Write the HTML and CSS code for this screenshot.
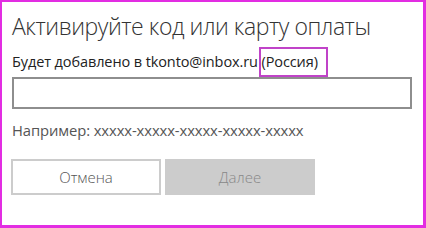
FILE: index.html
```html
<!DOCTYPE html>
<html lang="ru">
<head>
<meta charset="utf-8">
<link rel="stylesheet" href="styles.css">
</head>
<body>
<div class="dialog">
  <h1 class="title">Активируйте код или карту оплаты</h1>
  <p class="account">Будет добавлено в tkonto@inbox.ru <span class="region">(Россия)</span></p>
  <div class="code-input"></div>
  <p class="hint">Например: xxxxx-xxxxx-xxxxx-xxxxx-xxxxx</p>
  <div class="actions">
    <button class="btn btn-cancel">Отмена</button>
    <button class="btn btn-next">Далее</button>
  </div>
</div>
</body>
</html>
```
FILE: styles.css
```css
html, body {
  margin: 0;
  padding: 0;
  background: #fff;
}
.dialog {
  box-sizing: border-box;
  width: 426px;
  height: 228px;
  border-style: solid;
  border-color: #e22de2;
  border-width: 2px 3px 3px 2px;
  padding: 0 0 0 10px;
  font-family: "Open Sans", "Noto Sans", sans-serif;
  color: #222;
}
.title {
  margin: 9px 0 0 0;
  font-size: 23px;
  font-weight: 300;
  line-height: 30px;
  color: #333;
  letter-spacing: -0.45px;
}
.account {
  margin: 12px 0 0 0;
  font-size: 14.5px;
  line-height: 18px;
  color: #222;
  letter-spacing: -0.1px;
}
.region {
  position: relative;
  display: inline-block;
}
.region::after {
  content: "";
  position: absolute;
  left: -3px;
  right: -10px;
  top: -6px;
  bottom: -6px;
  border: 2px solid #c043c8;
}
.code-input {
  box-sizing: border-box;
  width: 400px;
  height: 32px;
  margin-top: 6px;
  border: 2px solid #8e8e8e;
  background: #fff;
}
.hint {
  margin: 12px 0 0 0;
  font-size: 14.8px;
  line-height: 18px;
  color: #555;
  letter-spacing: -0.1px;
}
.actions {
  display: flex;
  gap: 4px;
  margin-top: 20px;
  margin-left: -1px;
}
.btn {
  box-sizing: border-box;
  width: 150px;
  height: 36px;
  font-family: inherit;
  font-size: 15px;
  font-weight: 300;
  padding: 0;
}
.btn-cancel {
  background: #fff;
  border: 2px solid #cccccc;
  color: #555;
}
.btn-next {
  background: #cccccc;
  border: 2px solid #cccccc;
  color: #888;
}
```
